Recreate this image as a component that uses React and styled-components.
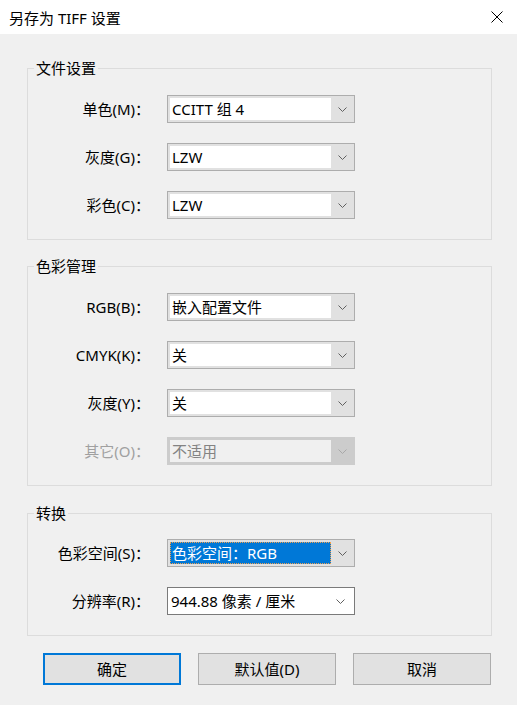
import React from "react";
import styled, { createGlobalStyle } from "styled-components";

const GlobalStyle = createGlobalStyle`
  html, body {
    margin: 0;
    padding: 0;
    background: #f0f0f0;
  }
  body {
    font-family: "Noto Sans", "Noto Sans CJK SC", sans-serif;
    font-size: 15px;
    color: #000;
  }
`;

const Dialog = styled.div`
  width: 517px;
  height: 705px;
  background: #f0f0f0;
  display: flex;
  flex-direction: column;
  overflow: hidden;
`;

const TitleBar = styled.div`
  height: 34px;
  background: #fff;
  display: flex;
  align-items: center;
  justify-content: space-between;
  padding: 0 14px 0 9px;
  font-size: 15px;
`;

const Body = styled.div`
  padding: 24px 25px 0 27px;
  display: flex;
  flex-direction: column;
`;

const Group = styled.fieldset`
  margin: 0 0 ${(p) => p.$gap || 0}px 0;
  padding: 0;
  border: 1px solid #dcdcdc;
  min-width: 0;
`;

const Legend = styled.legend`
  margin-left: 6px;
  padding: 0 2px;
  font-size: 15px;
  line-height: 20px;
`;

const Rows = styled.div`
  display: flex;
  flex-direction: column;
  gap: 20px;
  padding: ${(p) => p.$top}px 0 20px 0;
`;

const Row = styled.div`
  display: grid;
  grid-template-columns: 122px 188px;
  column-gap: 17px;
  align-items: center;
  height: 28px;
`;

const Label = styled.label`
  text-align: right;
  line-height: 20px;
  color: ${(p) => (p.$disabled ? "#a0a0a0" : "#000")};
  white-space: nowrap;
`;

const Combo = styled.div`
  height: 28px;
  box-sizing: border-box;
  border: 1px solid ${(p) => (p.$disabled ? "#cccccc" : "#adadad")};
  background: ${(p) => (p.$disabled ? "#cccccc" : "#e1e1e1")};
  display: flex;
  align-items: stretch;
  padding: 2px 0 2px 2px;
`;

const Field = styled.div`
  flex: 1;
  background: ${(p) =>
    p.$selected ? "#0078d7" : p.$disabled ? "#f0f0f0" : "#fff"};
  color: ${(p) => (p.$selected ? "#fff" : p.$disabled ? "#838383" : "#000")};
  border: 1px ${(p) => (p.$selected ? "dotted #f0a050" : "solid transparent")};
  display: flex;
  align-items: center;
  padding-left: 1px;
  line-height: 20px;
  white-space: nowrap;
`;

const ArrowBox = styled.div`
  width: 23px;
  display: flex;
  align-items: center;
  justify-content: center;
`;

const ListBox = styled.div`
  height: 28px;
  box-sizing: border-box;
  border: 1px solid #7a7a7a;
  background: #fff;
  display: flex;
  align-items: center;
  justify-content: space-between;
  padding: 0 9px 0 3px;
  line-height: 20px;
  white-space: nowrap;
`;

const Buttons = styled.div`
  display: flex;
  justify-content: flex-end;
  gap: 17px;
  margin-top: 17px;
  padding-right: 1px;
`;

const Button = styled.button`
  width: 138px;
  height: 32px;
  box-sizing: border-box;
  background: #e1e1e1;
  border: ${(p) => (p.$default ? "2px solid #0078d7" : "1px solid #adadad")};
  font-family: inherit;
  font-size: 15px;
  color: #000;
  padding: 0;
  line-height: 20px;
`;

const Chevron = ({ color = "#606060" }) => (
  <svg width="9" height="5" viewBox="0 0 9 5">
    <polyline points="0.5,0.5 4.5,4.5 8.5,0.5" fill="none" stroke={color} strokeWidth="1" />
  </svg>
);

const CloseIcon = () => (
  <svg width="12" height="12" viewBox="0 0 12 12">
    <path d="M0.5 0.5 L11.5 11.5 M11.5 0.5 L0.5 11.5" stroke="#000" strokeWidth="1" />
  </svg>
);

const ComboRow = ({ label, value, disabled, selected }) => (
  <Row>
    <Label $disabled={disabled}>{label}</Label>
    <Combo $disabled={disabled}>
      <Field $disabled={disabled} $selected={selected}>{value}</Field>
      <ArrowBox>
        <Chevron color={disabled ? "#a8a8a8" : "#606060"} />
      </ArrowBox>
    </Combo>
  </Row>
);

export default function App() {
  return (
    <>
      <GlobalStyle />
      <Dialog>
        <TitleBar>
          <span>另存为 TIFF 设置</span>
          <CloseIcon />
        </TitleBar>
        <Body>
          <Group $gap={16}>
            <Legend>文件设置</Legend>
            <Rows $top={17}>
              <ComboRow label="单色(M)：" value="CCITT 组 4" />
              <ComboRow label="灰度(G)：" value="LZW" />
              <ComboRow label="彩色(C)：" value="LZW" />
            </Rows>
          </Group>
          <Group $gap={17}>
            <Legend>色彩管理</Legend>
            <Rows $top={17}>
              <ComboRow label="RGB(B)：" value="嵌入配置文件" />
              <ComboRow label="CMYK(K)：" value="关" />
              <ComboRow label="灰度(Y)：" value="关" />
              <ComboRow label="其它(O)：" value="不适用" disabled />
            </Rows>
          </Group>
          <Group>
            <Legend>转换</Legend>
            <Rows $top={16}>
              <ComboRow label="色彩空间(S)：" value="色彩空间：RGB" selected />
              <Row>
                <Label>分辨率(R)：</Label>
                <ListBox>
                  <span>944.88 像素 / 厘米</span>
                  <Chevron />
                </ListBox>
              </Row>
            </Rows>
          </Group>
          <Buttons>
            <Button $default>确定</Button>
            <Button>默认值(D)</Button>
            <Button>取消</Button>
          </Buttons>
        </Body>
      </Dialog>
    </>
  );
}
